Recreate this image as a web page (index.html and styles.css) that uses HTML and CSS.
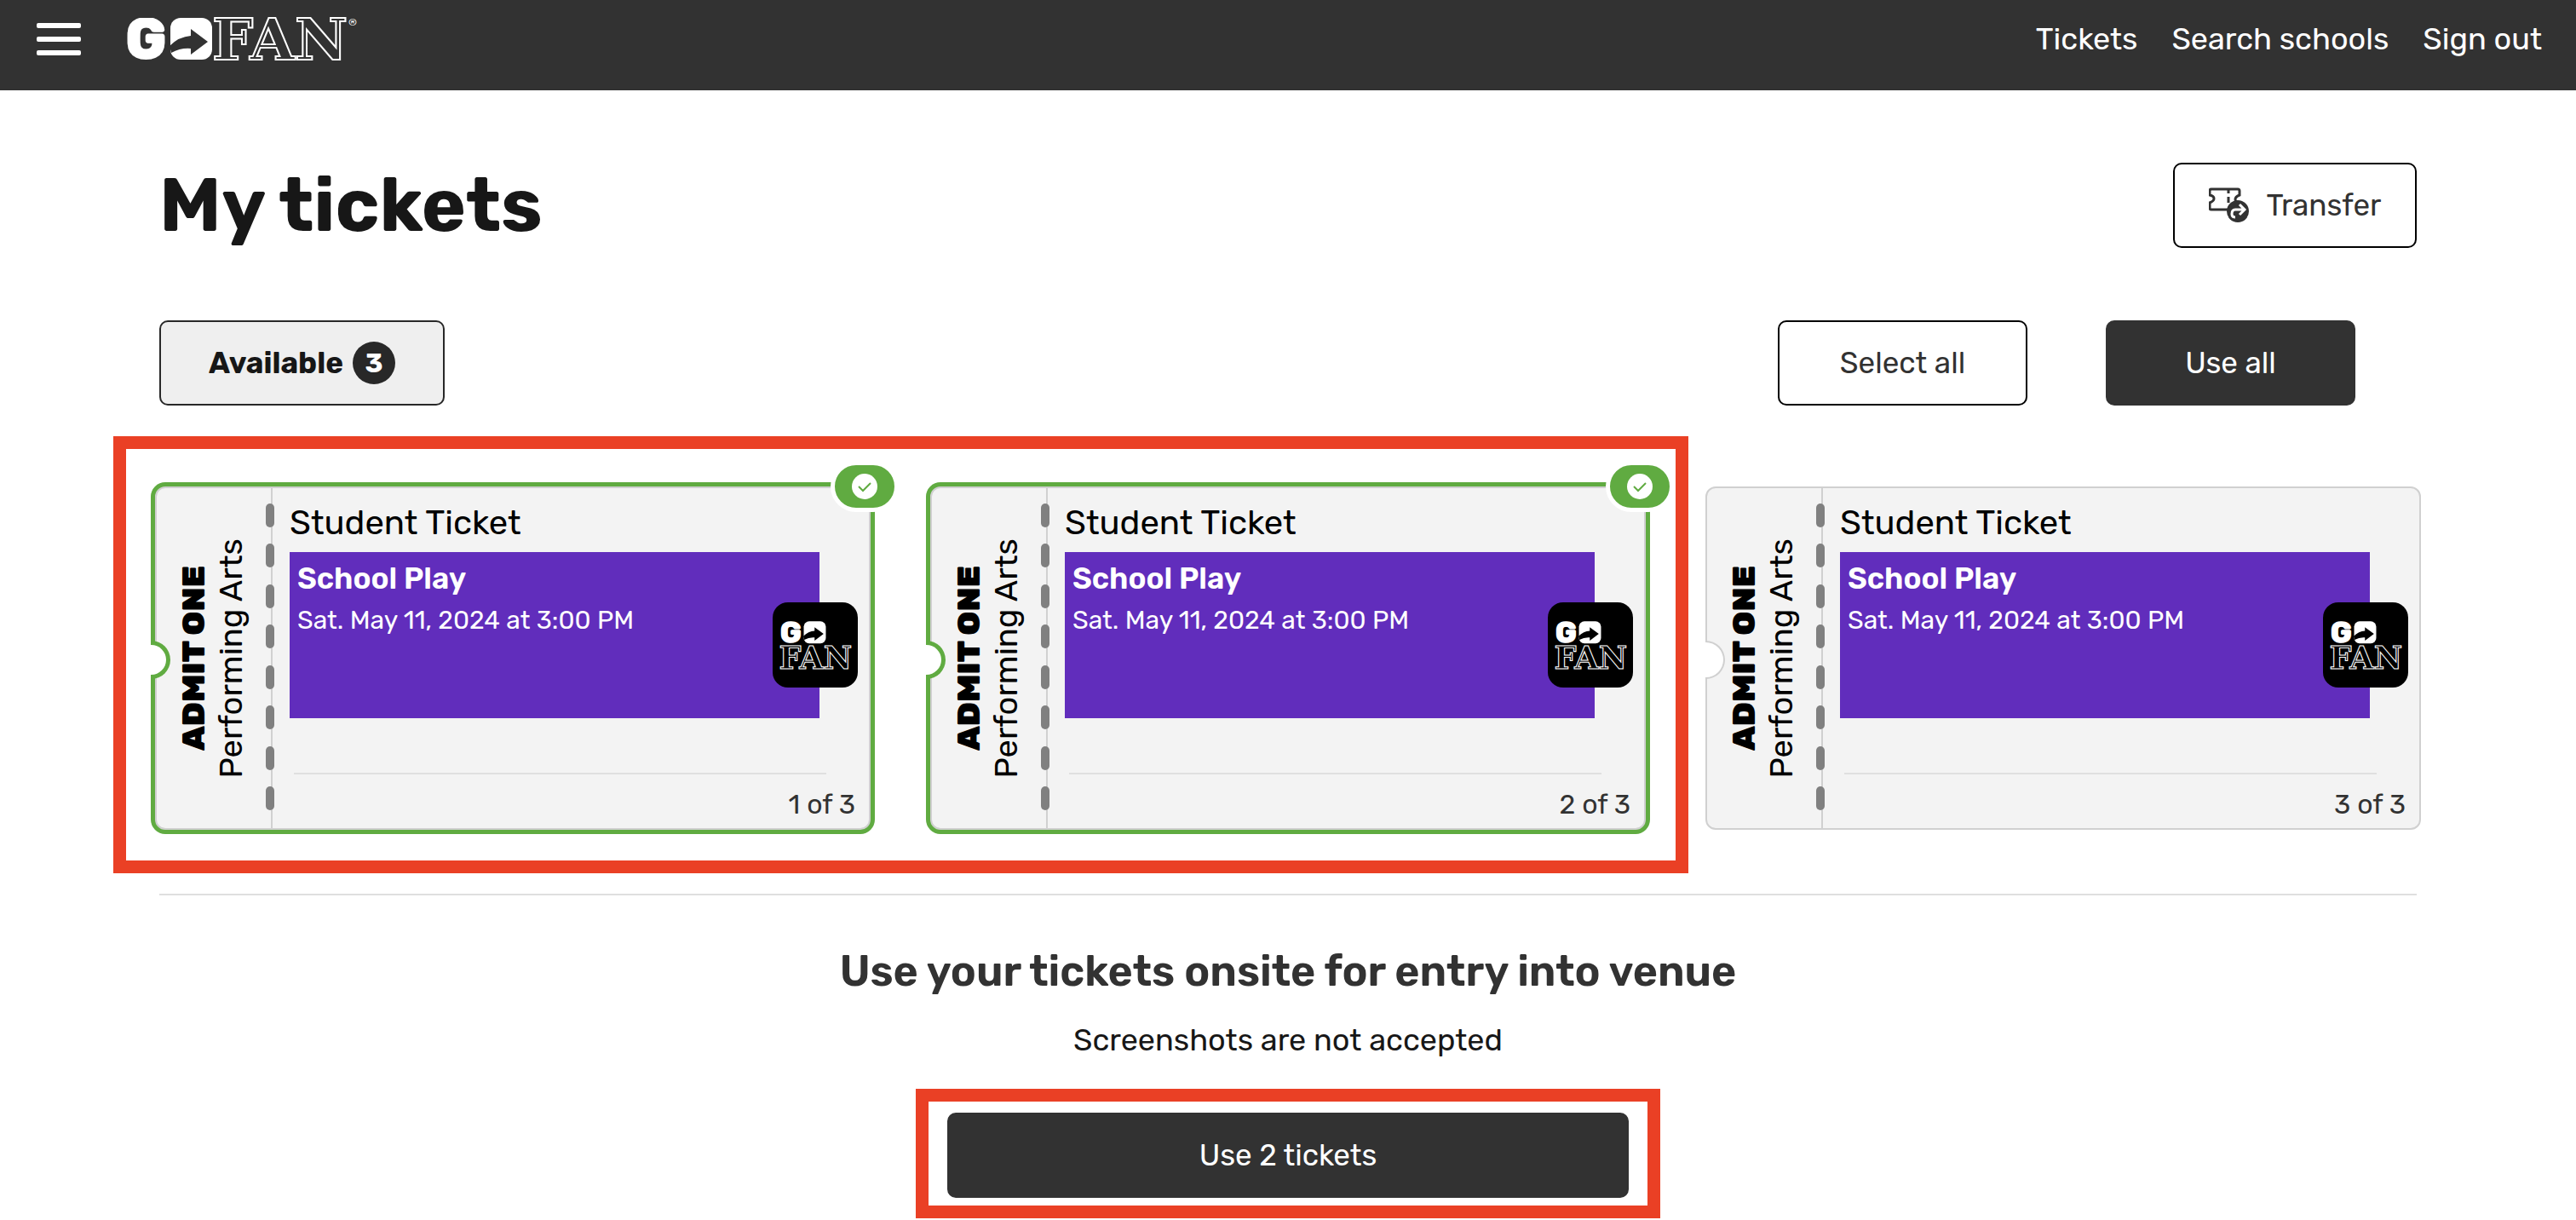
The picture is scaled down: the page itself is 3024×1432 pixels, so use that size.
FILE: index.html
```html
<!DOCTYPE html>
<html lang="en">
<head>
    <meta charset="UTF-8">
    <meta name="viewport" content="width=device-width, initial-scale=1.0">
    <title>My tickets - GoFan</title>
    <link rel="stylesheet" href="styles.css">
</head>
<body>
    <!-- Shared logo parts -->
    <svg class="symbols" aria-hidden="true">
        <symbol id="logo-go" viewBox="0 0 102 50">
            <text class="logo-g" x="0" y="47">G</text>
            <rect x="52" y="0" width="49" height="49" rx="12" fill="#fff"/>
            <path d="M51 33Q62 22 76 21V13L96 28 76 43V36Q64 35 53 41Z" fill="var(--logo-bg)"/>
        </symbol>
        <symbol id="logo-fan" viewBox="0 0 160 50" overflow="visible">
            <text class="logo-fan" x="-1" y="49">FAN</text>
        </symbol>
    </svg>

    <header class="navbar">
        <button class="menu-button" type="button" aria-label="Menu">
            <span></span>
            <span></span>
            <span></span>
        </button>
        <a class="brand" href="#" aria-label="GoFan">
            <svg width="280" height="56" viewBox="0 -3 280 56">
                <use href="#logo-go" x="0" y="0" width="102" height="50"/>
                <use href="#logo-fan" x="102" y="0" width="160" height="50"/>
                <text class="logo-mark" x="261" y="9">®</text>
            </svg>
        </a>
        <nav class="nav-links">
            <a href="#">Tickets</a>
            <a href="#">Search schools</a>
            <a href="#">Sign out</a>
        </nav>
    </header>

    <main class="container">
        <div class="title-row">
            <h1>My tickets</h1>
            <button class="btn btn-transfer" type="button">
                <svg width="48" height="42" viewBox="0 0 48 42" fill="none">
                    <path d="M3 2H34Q36 2 36 4V9Q31 11 31 14Q31 17 36 19V24H24V26H3Q1 26 1 24V18Q6 16 6 13Q6 10 1 9V4Q1 2 3 2Z" stroke="#323232" stroke-width="3"/>
                    <path d="M23 2V7M23 11V18" stroke="#323232" stroke-width="3"/>
                    <circle cx="34" cy="28" r="13" fill="#323232"/>
                    <path d="M31 35Q27 35 27 31Q27 26 31 26H41M36 20L42 26L36 32" stroke="#fff" stroke-width="3"/>
                </svg>
                Transfer
            </button>
        </div>

        <div class="filter-row">
            <button class="btn btn-filter" type="button">Available <span class="count">3</span></button>
            <div class="actions">
                <button class="btn" type="button">Select all</button>
                <button class="btn btn-dark" type="button">Use all</button>
            </div>
        </div>

        <section class="tickets">
            <article class="ticket selected">
                <div class="stub">
                    <span class="notch"></span>
                    <strong>ADMIT ONE</strong>
                    <span class="category">Performing Arts</span>
                    <div class="perforation"><i></i><i></i><i></i><i></i><i></i><i></i><i></i><i></i></div>
                </div>
                <div class="details">
                    <h2>Student Ticket</h2>
                    <div class="event">
                        <h3>School Play</h3>
                        <p>Sat. May 11, 2024 at 3:00 PM</p>
                    </div>
                    <p class="number">1 of 3</p>
                </div>
                <svg class="tile" viewBox="0 0 100 100">
                    <use href="#logo-go" x="9" y="22" width="54" height="27"/>
                    <use href="#logo-fan" x="8" y="52" width="86" height="27"/>
                </svg>
                <span class="check">
                    <svg width="32" height="32" viewBox="0 0 32 32" fill="none">
                        <circle cx="16" cy="16" r="15" fill="#fff"/>
                        <path d="M9 16L14 21L23 12" stroke="#60ab41" stroke-width="2"/>
                    </svg>
                </span>
            </article>

            <article class="ticket selected">
                <div class="stub">
                    <span class="notch"></span>
                    <strong>ADMIT ONE</strong>
                    <span class="category">Performing Arts</span>
                    <div class="perforation"><i></i><i></i><i></i><i></i><i></i><i></i><i></i><i></i></div>
                </div>
                <div class="details">
                    <h2>Student Ticket</h2>
                    <div class="event">
                        <h3>School Play</h3>
                        <p>Sat. May 11, 2024 at 3:00 PM</p>
                    </div>
                    <p class="number">2 of 3</p>
                </div>
                <svg class="tile" viewBox="0 0 100 100">
                    <use href="#logo-go" x="9" y="22" width="54" height="27"/>
                    <use href="#logo-fan" x="8" y="52" width="86" height="27"/>
                </svg>
                <span class="check">
                    <svg width="32" height="32" viewBox="0 0 32 32" fill="none">
                        <circle cx="16" cy="16" r="15" fill="#fff"/>
                        <path d="M9 16L14 21L23 12" stroke="#60ab41" stroke-width="2"/>
                    </svg>
                </span>
            </article>

            <article class="ticket">
                <div class="stub">
                    <span class="notch"></span>
                    <strong>ADMIT ONE</strong>
                    <span class="category">Performing Arts</span>
                    <div class="perforation"><i></i><i></i><i></i><i></i><i></i><i></i><i></i><i></i></div>
                </div>
                <div class="details">
                    <h2>Student Ticket</h2>
                    <div class="event">
                        <h3>School Play</h3>
                        <p>Sat. May 11, 2024 at 3:00 PM</p>
                    </div>
                    <p class="number">3 of 3</p>
                </div>
                <svg class="tile" viewBox="0 0 100 100">
                    <use href="#logo-go" x="9" y="22" width="54" height="27"/>
                    <use href="#logo-fan" x="8" y="52" width="86" height="27"/>
                </svg>
            </article>

            <div class="highlight"></div>
        </section>

        <section class="use-tickets">
            <h2>Use your tickets onsite for entry into venue</h2>
            <p>Screenshots are not accepted</p>
            <div class="highlight-box">
                <button class="btn btn-dark btn-use" type="button">Use 2 tickets</button>
            </div>
        </section>
    </main>
</body>
</html>
```

FILE: styles.css
```css
:root {
    --dark: #323232;
    --text-color: #171717;
    --green: #60ab41;
    --red: #ea4025;
    --purple: #612dbc;
    --card-background: #f3f3f3;
    --border-color: #d0d0d0;
    --line-color: #dfdfdf;
    --logo-bg: var(--dark);
}

* {
    margin: 0;
    padding: 0;
    box-sizing: border-box;
    font-family: 'Rubik', 'Inter', sans-serif;
}

body {
    background-color: #fff;
    color: var(--text-color);
    font-size: 36px;
    line-height: 44px;
}

.symbols {
    display: none;
}

/* Logo */
.logo-g {
    font-size: 65px;
    font-weight: 700;
    fill: #fff;
    stroke: #fff;
    stroke-width: 3px;
    stroke-linejoin: round;
}

.logo-fan {
    font-family: 'DejaVu Serif', serif;
    font-size: 68px;
    font-weight: 700;
    fill: var(--logo-bg);
    stroke: #fff;
    stroke-width: 2px;
}

.logo-mark {
    font-size: 12px;
    fill: #fff;
}

/* Navbar */
.navbar {
    display: flex;
    align-items: center;
    height: 106px;
    padding: 0 40px 14px 43px;
    background-color: var(--dark);
}

.menu-button {
    display: flex;
    flex-direction: column;
    gap: 10px;
    width: 52px;
    margin-right: 53px;
    background: none;
    border: none;
    cursor: pointer;
}

.menu-button span {
    height: 6px;
    border-radius: 2px;
    background-color: #fff;
}

.brand,
.brand svg {
    display: block;
}

.nav-links {
    display: flex;
    gap: 40px;
    margin-left: auto;
}

.nav-links a {
    color: #fff;
    text-decoration: none;
}

/* Page */
.container {
    padding: 85px 187px 0;
}

.title-row,
.filter-row {
    display: flex;
    align-items: center;
    justify-content: space-between;
}

.filter-row {
    margin-top: 85px;
}

h1 {
    font-size: 88px;
    line-height: 100px;
    font-weight: 700;
}

.actions {
    display: flex;
    gap: 92px;
    margin-right: 72px;
}

.btn {
    display: flex;
    align-items: center;
    justify-content: center;
    width: 293px;
    height: 100px;
    border: 2px solid #000;
    border-radius: 10px;
    background-color: #fff;
    color: var(--dark);
    font-size: 35px;
    cursor: pointer;
}

.btn-transfer {
    gap: 20px;
    width: 286px;
}

.btn-filter {
    gap: 11px;
    width: 335px;
    border-color: #282828;
    background-color: #efefef;
    color: var(--text-color);
    font-weight: 700;
}

.btn-dark {
    border-color: var(--dark);
    background-color: var(--dark);
    color: #fff;
}

.count {
    width: 50px;
    height: 50px;
    border-radius: 50%;
    background-color: #282828;
    color: #fff;
    font-size: 32px;
    line-height: 50px;
    text-align: center;
}

/* Tickets */
.tickets {
    display: grid;
    grid-template-columns: repeat(3, minmax(0, 1fr));
    gap: 70px;
    margin: 95px -5px 0;
}

.ticket {
    position: relative;
    display: flex;
    grid-row: 1;
    border: 2px solid var(--border-color);
    border-radius: 12px;
    background-color: var(--card-background);
    color: #000;
}

.ticket:nth-child(1) {
    grid-column: 1;
}

.ticket:nth-child(2) {
    grid-column: 2;
}

.ticket:nth-child(3) {
    grid-column: 3;
}

.ticket.selected {
    box-shadow: 0 0 0 5px var(--green);
}

.stub {
    position: relative;
    display: flex;
    align-items: center;
    justify-content: flex-end;
    width: 136px;
    padding-right: 25px;
    border-right: 2px solid var(--border-color);
}

.stub strong,
.category {
    font-size: 38px;
    writing-mode: vertical-rl;
    transform: rotate(180deg);
    white-space: nowrap;
}

.stub strong {
    font-weight: 900;
}

.notch {
    position: absolute;
    top: 179px;
    left: -2px;
    width: 23px;
    height: 45px;
    border: 2px solid var(--border-color);
    border-left: none;
    border-radius: 0 23px 23px 0;
    background-color: #fff;
}

.selected .notch {
    left: -7px;
    border-color: var(--green);
    border-width: 5px;
    border-left: none;
}

.perforation {
    position: absolute;
    top: 18px;
    right: -4px;
    bottom: 21px;
    display: flex;
    flex-direction: column;
    justify-content: space-between;
}

.perforation i {
    width: 10px;
    height: 28px;
    border-radius: 5px;
    background-color: #808080;
}

.details {
    flex: 1;
    padding: 16px 0 10px 20px;
}

.details h2 {
    font-size: 40px;
    line-height: 50px;
    font-weight: 400;
}

.event {
    min-height: 195px;
    margin: 9px 58px 0 0;
    padding: 9px;
    background-color: var(--purple);
    color: #fff;
}

.event h3 {
    font-size: 35px;
    line-height: 44px;
    font-weight: 600;
}

.event p {
    margin-top: 9px;
    font-size: 30px;
    line-height: 36px;
}

.number {
    padding-right: 16px;
    color: var(--dark);
    font-size: 32px;
    line-height: 36px;
    text-align: right;
}

.number::before {
    content: "";
    display: block;
    height: 2px;
    margin: 64px 34px 17px 5px;
    background-color: var(--line-color);
}

.tile {
    --logo-bg: #000;
    position: absolute;
    top: 134px;
    right: 13px;
    width: 100px;
    height: 100px;
    border-radius: 18px;
    background-color: #000;
}

.check {
    position: absolute;
    top: -32px;
    right: -35px;
    display: flex;
    align-items: center;
    justify-content: center;
    width: 80px;
    height: 60px;
    border: 5px solid #fff;
    border-radius: 30px;
    background-color: var(--green);
}

.highlight {
    grid-row: 1;
    grid-column: 1 / 3;
    margin: -59px -50px -51px -49px;
    border: 15px solid var(--red);
    pointer-events: none;
}

/* Use tickets */
.use-tickets {
    display: flex;
    flex-direction: column;
    align-items: center;
    margin-top: 75px;
    padding-top: 57px;
    border-top: 2px solid var(--line-color);
}

.use-tickets h2 {
    color: var(--dark);
    font-size: 50px;
    line-height: 64px;
    font-weight: 600;
}

.use-tickets p {
    margin-top: 27px;
}

.highlight-box {
    margin-top: 35px;
    padding: 13px 22px 9px;
    border: 15px solid var(--red);
}

.btn-use {
    width: 800px;
}
```
